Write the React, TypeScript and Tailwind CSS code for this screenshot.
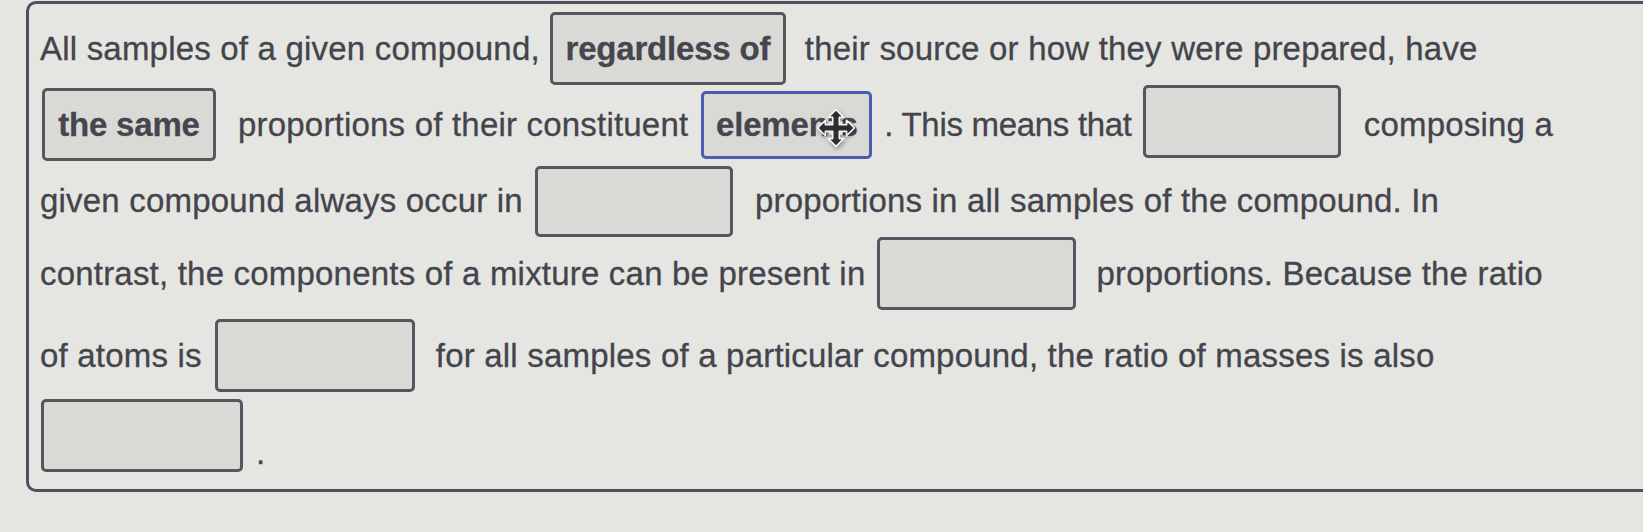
import React from 'react';

const font = { fontFamily: '"Liberation Sans", Arial, Helvetica, sans-serif' };

// Empty drop target / filled answer tile
const Slot: React.FC<{ w: string; label?: string; active?: boolean; h?: string }> = ({ w, label, active, h }) => (
  <div
    className={`${w} ${h ?? 'h-[73px]'} shrink-0 rounded-[5px] bg-[#d9d9d6] flex items-center justify-center ${
      active ? 'border-[3px] border-[#4a5cae]' : 'border-[3px] border-[#56565e]'
    }`}
  >
    {label && <span className="font-bold tracking-[-0.2px] text-[#46464e]">{label}</span>}
  </div>
);

const MoveCursor: React.FC = () => (
  <svg width="40" height="40" viewBox="0 0 36 36" className="absolute left-[816px] top-[108px] drop-shadow-[1px_2px_2px_rgba(0,0,0,0.35)]">
    <polygon
      points="18,1.5 25,8.5 21,8.5 21,15 27.5,15 27.5,11 34.5,18 27.5,25 27.5,21 21,21 21,27.5 25,27.5 18,34.5 11,27.5 15,27.5 15,21 8.5,21 8.5,25 1.5,18 8.5,11 8.5,15 15,15 15,8.5 11,8.5"
      fill="#2c2c33"
      stroke="#f4f4f4"
      strokeWidth="1.5"
      strokeLinejoin="round"
    />
    <rect x="12" y="12" width="3" height="3" fill="#e6e6e6" />
    <rect x="21" y="12" width="3" height="3" fill="#e6e6e6" />
    <rect x="12" y="21" width="3" height="3" fill="#e6e6e6" />
    <rect x="21" y="21" width="3" height="3" fill="#e6e6e6" />
  </svg>
);

export default function App() {
  return (
    <div
      className="relative w-[1643px] h-[532px] overflow-hidden bg-[#e5e5e1] pl-[26px] pt-[1px] text-[33px] tracking-[0.2px] text-[#44444c] [-webkit-text-stroke:0.3px_#44444c]"
      style={font}
    >
      <div className="w-[1660px] h-[491px] border-[3px] border-r-0 border-[#4f5060] rounded-l-[10px] pl-[11px] pt-[8px] flex flex-col">
        {/* line 1 */}
        <div className="flex items-center h-[73px] whitespace-nowrap">
          <span>All samples of a given compound,</span>
          <div className="ml-[10px]">
            <Slot w="w-[236px]" label="regardless of" />
          </div>
          <span className="ml-[19px]">their source or how they were prepared, have</span>
        </div>

        {/* line 2 */}
        <div className="flex items-center h-[73px] mt-[3px] whitespace-nowrap">
          <div className="ml-[2px]">
            <Slot w="w-[174px]" label="the same" />
          </div>
          <span className="ml-[22px]">proportions of their constituent</span>
          <div className="ml-[13px]">
            <Slot w="w-[171px]" h="h-[68px]" label="elements" active />
          </div>
          <span className="ml-[12px] tracking-[-0.3px]">. This means that</span>
          <div className="ml-[11px] -mt-[6px]">
            <Slot w="w-[198px]" />
          </div>
          <span className="ml-[23px]">composing a</span>
        </div>

        {/* line 3 */}
        <div className="flex items-center h-[72px] mt-[4px] whitespace-nowrap">
          <span>given compound always occur in</span>
          <div className="ml-[12px]">
            <Slot w="w-[198px]" h="h-[71px]" />
          </div>
          <span className="ml-[22px]">proportions in all samples of the compound. In</span>
        </div>

        {/* line 4 */}
        <div className="flex items-center h-[73px] whitespace-nowrap">
          <span>contrast, the components of a mixture can be present in</span>
          <div className="ml-[12px]">
            <Slot w="w-[199px]" />
          </div>
          <span className="ml-[20px]">proportions. Because the ratio</span>
        </div>

        {/* line 5 */}
        <div className="flex items-center h-[73px] mt-[9px] whitespace-nowrap">
          <span>of atoms is</span>
          <div className="ml-[13px]">
            <Slot w="w-[200px]" />
          </div>
          <span className="ml-[21px]">for all samples of a particular compound, the ratio of masses is also</span>
        </div>

        {/* line 6 */}
        <div className="flex items-center h-[73px] mt-[7px] whitespace-nowrap">
          <div className="ml-[1px]">
            <Slot w="w-[202px]" />
          </div>
          <span className="ml-[13px] mt-[34px]">.</span>
        </div>
      </div>

      <MoveCursor />
    </div>
  );
}
